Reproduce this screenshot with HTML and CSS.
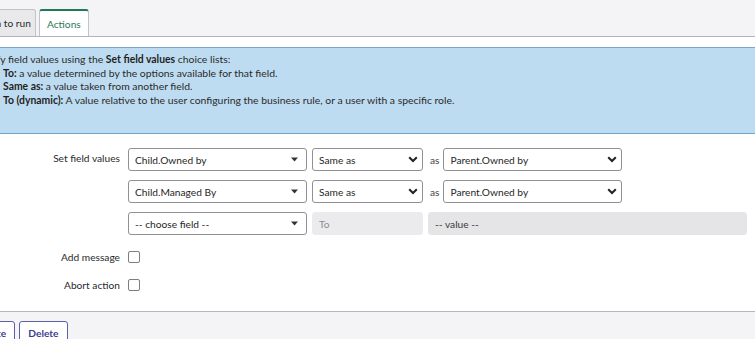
FILE: index.html
```html
<!DOCTYPE html>
<html>
<head>
<meta charset="utf-8">
<link rel="stylesheet" href="styles.css">
</head>
<body>
<div class="page">
  <div class="tabbar">
    <div class="tab">When to run</div>
    <div class="tab active">Actions</div>
  </div>
  <div class="info">
    <p class="lead">Modify field values using the <b>Set field values</b> choice lists:</p>
    <ul class="list">
      <li><b>To:</b> a value determined by the options available for that field.</li>
      <li><b>Same as:</b> a value taken from another field.</li>
      <li><b>To (dynamic):</b> A value relative to the user configuring the business rule, or a user with a specific role.</li>
    </ul>
  </div>
  <div class="form">
    <div class="label label-top">Set field values</div>
    <div class="rows">
      <div class="row">
        <div class="ctl field"><span>Child.Owned by</span><svg class="tri" width="7" height="5" viewBox="0 0 7 5"><path d="M0 0.5H7L3.5 4.5Z" fill="#333"/></svg></div>
        <div class="ctl op"><span>Same as</span><svg class="chev" width="10" height="7" viewBox="0 0 10 7"><path d="M1.2 1.2L5 5L8.8 1.2" fill="none" stroke="#222" stroke-width="2"/></svg></div>
        <span class="as">as</span>
        <div class="ctl val"><span>Parent.Owned by</span><svg class="chev" width="10" height="7" viewBox="0 0 10 7"><path d="M1.2 1.2L5 5L8.8 1.2" fill="none" stroke="#222" stroke-width="2"/></svg></div>
      </div>
      <div class="row">
        <div class="ctl field"><span>Child.Managed By</span><svg class="tri" width="7" height="5" viewBox="0 0 7 5"><path d="M0 0.5H7L3.5 4.5Z" fill="#333"/></svg></div>
        <div class="ctl op"><span>Same as</span><svg class="chev" width="10" height="7" viewBox="0 0 10 7"><path d="M1.2 1.2L5 5L8.8 1.2" fill="none" stroke="#222" stroke-width="2"/></svg></div>
        <span class="as">as</span>
        <div class="ctl val"><span>Parent.Owned by</span><svg class="chev" width="10" height="7" viewBox="0 0 10 7"><path d="M1.2 1.2L5 5L8.8 1.2" fill="none" stroke="#222" stroke-width="2"/></svg></div>
      </div>
      <div class="row">
        <div class="ctl field"><span>-- choose field --</span><svg class="tri" width="7" height="5" viewBox="0 0 7 5"><path d="M0 0.5H7L3.5 4.5Z" fill="#333"/></svg></div>
        <div class="ctl op disabled"><span>To</span></div>
        <div class="ctl value disabled-dark"><span>-- value --</span></div>
      </div>
    </div>
    <div class="label">Add message</div>
    <div class="checkcell"><span class="check"></span></div>
    <div class="label">Abort action</div>
    <div class="checkcell"><span class="check"></span></div>
  </div>
  <div class="footer">
    <button class="btn">Update</button>
    <button class="btn">Delete</button>
  </div>
</div>
</body>
</html>
```

FILE: styles.css
```css
html, body {
  margin: 0;
  padding: 0;
  overflow: hidden;
  background: #ffffff;
}
body {
  font-family: Lato, "Open Sans", sans-serif;
  font-size: 10.2px;
  color: #2a2a2a;
  width: 755px;
  height: 339px;
}
.page {
  margin-left: -40px;
}
.tabbar {
  display: flex;
  gap: 3px;
  padding-top: 9px;
  padding-left: 7px;
  background: #f4f4f6;
  border-bottom: 1px solid #b3b3b9;
  height: 27px;
}
.tab {
  box-sizing: border-box;
  height: 27px;
  padding: 0 4px 0 6px;
  display: flex;
  align-items: center;
  background: #e9e9ec;
  border: 1px solid #c3c3c8;
  border-bottom: none;
  border-radius: 3px 3px 0 0;
  color: #2a2a2a;
}
.tab.active {
  background: #ffffff;
  border-top: 2px solid #1e7a56;
  color: #2b7a5a;
  padding: 1px 7px 0 7px;
}
.info {
  margin-top: 10px;
  background: #bedcf1;
  border-top: 1px solid #7aa6cc;
  border-bottom: 1px solid #77a3ca;
  padding: 5px 0 26px 0;
  line-height: 13.5px;
  font-size: 10.4px;
}
.info b {
  font-weight: 700;
  color: #1f1f1f;
}
.lead {
  margin: 0;
  padding-left: 13px;
}
.list {
  margin: 0;
  padding: 0 0 0 43px;
  list-style: none;
}
.form {
  display: grid;
  grid-template-columns: 160px auto;
  column-gap: 8px;
  row-gap: 0;
  padding: 14px 0 12px 0;
  border-bottom: 1px solid #b6b6bc;
  box-shadow: 0 1px 1px #dcdce0;
}
.label {
  text-align: right;
  color: #2a2a2a;
  display: flex;
  align-items: center;
  justify-content: flex-end;
  height: 28px;
}
.label-top {
  align-items: flex-start;
  padding-top: 4px;
  height: auto;
}
.rows {
  display: flex;
  flex-direction: column;
  gap: 9px;
  margin-bottom: 8px;
}
.row {
  display: flex;
  align-items: center;
  height: 23px;
}
.ctl {
  box-sizing: border-box;
  height: 23px;
  border: 1px solid #909096;
  border-radius: 3px;
  display: flex;
  align-items: center;
  justify-content: space-between;
  padding: 0 4px 0 6px;
  background: #ffffff;
  color: #1f1f1f;
}
.field {
  width: 179px;
  padding-right: 8px;
}
.op {
  width: 111px;
  margin-left: 5px;
}
.val {
  width: 179px;
}
.as {
  margin: 0 4px 0 7px;
  color: #444;
}
.disabled {
  background: #ebebed;
  border-color: #ebebed;
  color: #8b8b90;
}
.value {
  width: 319px;
  margin-left: 5px;
}
.disabled-dark {
  background: #e5e5e8;
  border-color: #e5e5e8;
  color: #3a3a3a;
}
.checkcell {
  display: flex;
  align-items: center;
  height: 28px;
}
.check {
  box-sizing: border-box;
  width: 12px;
  height: 12px;
  border: 1px solid #7c7c82;
  border-radius: 2px;
  background: #fff;
}
.footer {
  background: #f4f4f6;
  height: 40px;
  display: flex;
  gap: 0;
  padding: 9px 0 0 4px;
}
.btn {
  font-family: Lato, "Open Sans", sans-serif;
  font-size: 10.2px;
  font-weight: 700;
  color: #3c3d8c;
  background: #ffffff;
  border: 1px solid #5e5fa6;
  border-radius: 3px;
  height: 24px;
  margin: 0 4px 0 0;
  padding: 0 8px;
}
```
